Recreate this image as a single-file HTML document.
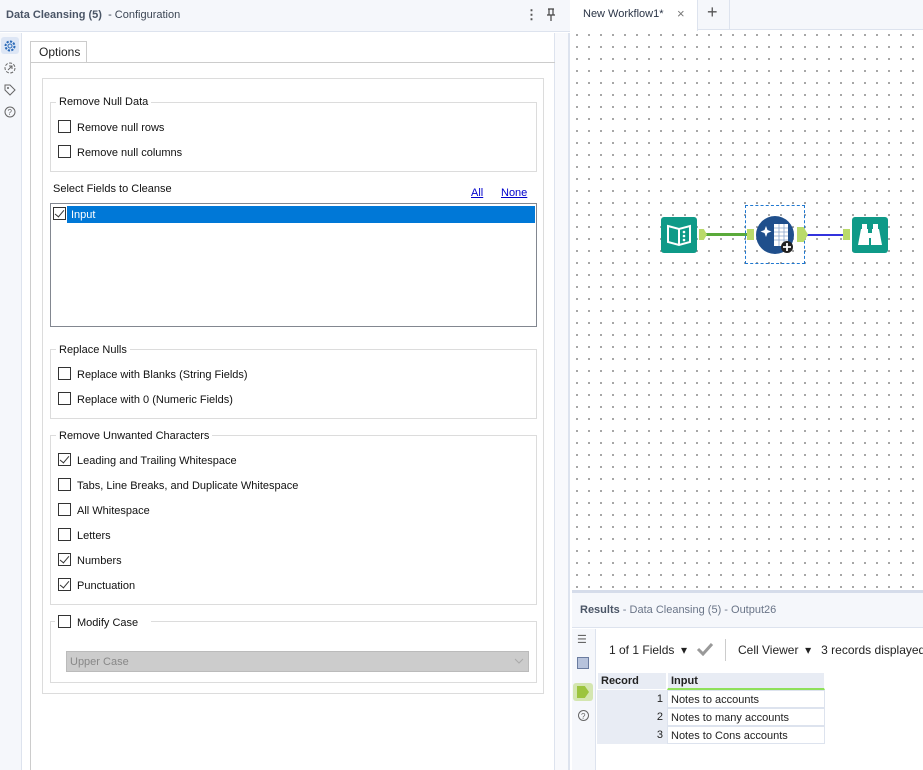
<!DOCTYPE html>
<html><head><style>
*{box-sizing:border-box;margin:0;padding:0}
body{width:923px;height:770px;position:relative;overflow:hidden;font-family:"Liberation Sans",sans-serif;font-size:11px;color:#222;background:#fff}
.a{position:absolute;white-space:nowrap}
.cb{position:absolute;width:13px;height:13px;border:1px solid #333;background:#fff}
.cb.c::after{content:"";position:absolute;left:3px;top:0px;width:4px;height:8px;border:solid #333;border-width:0 1.5px 1.5px 0;transform:rotate(40deg)}
.lbl{position:absolute;font-size:11px;color:#111;white-space:nowrap;margin-top:1px}
.grp{position:absolute;border:1px solid #dcdcdc}
.gt{position:absolute;background:#fff;padding:0 3px;font-size:11px;color:#111;margin-top:1px}
</style></head><body>
<div class="a" style="left:0;top:0;width:570px;height:32px;background:#f5f7fb;border-bottom:1px solid #dde3ee"></div>
<div class="a" style="left:6px;top:9px;font-size:11px;color:#3c4654"><span style="font-weight:bold;color:#4a5566">Data Cleansing (5)</span>&nbsp; - Configuration</div>
<div class="a" style="left:525px;top:7px;font-size:13px;color:#555;font-weight:bold">⋮</div>
<svg class="a" style="left:545px;top:8px" width="12" height="14"><path d="M3 1h6M4 1v6M8 1v6M2 7h8M6 7v6" stroke="#444" stroke-width="1.2" fill="none"/></svg>
<div class="a" style="left:0;top:33px;width:22px;height:737px;background:#f5f7fb;border-right:1px solid #dde3ee"></div>
<div class="a" style="left:1px;top:37px;width:18px;height:17px;background:#dde6f5;border-radius:3px"></div>
<svg class="a" style="left:3px;top:39px" width="14" height="14"><circle cx="7" cy="7" r="4.5" stroke="#2a6ab8" stroke-width="2" fill="none" stroke-dasharray="2.2 1.3"/><circle cx="7" cy="7" r="2" stroke="#2a6ab8" fill="none"/></svg>
<svg class="a" style="left:3px;top:61px" width="14" height="14"><circle cx="7" cy="7" r="5" stroke="#666" fill="none" stroke-dasharray="3 1.5"/><path d="M5 9l4-4M6 5h3v3" stroke="#666" fill="none"/></svg>
<svg class="a" style="left:3px;top:83px" width="14" height="14"><path d="M2 2h5l5 5-5 5-5-5z" stroke="#666" fill="none"/><circle cx="5" cy="5" r="1" fill="#666"/></svg>
<svg class="a" style="left:3px;top:105px" width="14" height="14"><circle cx="7" cy="7" r="5" stroke="#666" fill="none"/><text x="4.5" y="10" font-size="8" fill="#666" font-family="Liberation Sans">?</text></svg>
<div class="a" style="left:554px;top:33px;width:16px;height:737px;background:#f8f9fc;border-left:1px solid #dde3ee;border-right:2px solid #dde3ee"></div>
<div class="a" style="left:30px;top:41px;width:57px;height:22px;border:1px solid #ccc;border-bottom:none;background:#fff;font-size:12px;padding:3px 0 0 8px">Options</div>
<div class="a" style="left:30px;top:62px;width:525px;height:1px;background:#ccc"></div>
<div class="a" style="left:30px;top:62px;width:1px;height:708px;background:#ccc"></div>
<div class="a" style="left:42px;top:78px;width:502px;height:616px;border:1px solid #dcdcdc"></div>

<div class="grp" style="left:50px;top:102px;width:487px;height:70px"></div>
<div class="gt" style="left:56px;top:95px">Remove Null Data</div>
<div class="cb" style="left:58px;top:120px"></div><div class="lbl" style="left:77px;top:121px">Remove null rows</div>
<div class="cb" style="left:58px;top:145px"></div><div class="lbl" style="left:77px;top:146px">Remove null columns</div>

<div class="lbl" style="left:53px;top:182px">Select Fields to Cleanse</div>
<div class="lbl" style="left:471px;top:186px;color:#00c;text-decoration:underline">All</div>
<div class="lbl" style="left:501px;top:186px;color:#00c;text-decoration:underline">None</div>
<div class="a" style="left:50px;top:203px;width:487px;height:124px;border:1px solid #828790"></div>
<div class="a" style="left:67px;top:206px;width:468px;height:17px;background:#0078d7"></div>
<div class="cb c" style="left:53px;top:207px"></div>
<div class="lbl" style="left:71px;top:208px;color:#fff">Input</div>

<div class="grp" style="left:50px;top:349px;width:487px;height:70px"></div>
<div class="gt" style="left:56px;top:343px">Replace Nulls</div>
<div class="cb" style="left:58px;top:367px"></div><div class="lbl" style="left:77px;top:368px">Replace with Blanks (String Fields)</div>
<div class="cb" style="left:58px;top:392px"></div><div class="lbl" style="left:77px;top:393px">Replace with 0 (Numeric Fields)</div>

<div class="grp" style="left:50px;top:435px;width:487px;height:170px"></div>
<div class="gt" style="left:56px;top:429px">Remove Unwanted Characters</div>
<div class="cb c" style="left:58px;top:453px"></div><div class="lbl" style="left:77px;top:454px">Leading and Trailing Whitespace</div>
<div class="cb" style="left:58px;top:478px"></div><div class="lbl" style="left:77px;top:479px">Tabs, Line Breaks, and Duplicate Whitespace</div>
<div class="cb" style="left:58px;top:503px"></div><div class="lbl" style="left:77px;top:504px">All Whitespace</div>
<div class="cb" style="left:58px;top:528px"></div><div class="lbl" style="left:77px;top:529px">Letters</div>
<div class="cb c" style="left:58px;top:553px"></div><div class="lbl" style="left:77px;top:554px">Numbers</div>
<div class="cb c" style="left:58px;top:578px"></div><div class="lbl" style="left:77px;top:579px">Punctuation</div>

<div class="grp" style="left:50px;top:621px;width:487px;height:62px"></div>
<div class="a" style="left:55px;top:614px;width:96px;height:16px;background:#fff"></div>
<div class="cb" style="left:58px;top:615px"></div><div class="lbl" style="left:77px;top:616px">Modify Case</div>
<div class="a" style="left:66px;top:651px;width:463px;height:21px;background:#ccc;border:1px solid #bbb;color:#888;font-size:11px;padding:4px 0 0 3px">Upper Case</div>
<svg class="a" style="left:514px;top:657px" width="10" height="8"><path d="M1 2l4 4 4-4" stroke="#aaa" fill="none"/></svg>

<div class="a" style="left:572px;top:0;width:351px;height:30px;background:#f5f7fb;border-bottom:1px solid #dde3ee"></div>
<div class="a" style="left:572px;top:0;width:126px;height:31px;background:#fff;border-right:1px solid #dde3ee"></div>
<div class="a" style="left:583px;top:8px;font-size:11px;color:#2a3446">New Workflow1*</div>
<div class="a" style="left:677px;top:6px;font-size:13px;color:#777">×</div>
<div class="a" style="left:707px;top:2px;font-size:18px;color:#555">+</div>
<div class="a" style="left:729px;top:0;width:1px;height:30px;background:#dde3ee"></div>
<div class="a" style="left:572px;top:31px;width:351px;height:560px;background-color:#fff;background-image:radial-gradient(circle,#8a8a8a 0.8px,transparent 1px);background-size:12px 12px;background-position:-1px -2px"></div>
<div class="a" style="left:703px;top:233px;width:47px;height:3px;background:#5aaa3a"></div>
<div class="a" style="left:805px;top:234px;width:40px;height:2px;background:#3333dd"></div>
<div class="a" style="left:745px;top:205px;width:60px;height:59px;border:1px dashed #1f78d1"></div>
<div class="a" style="left:661px;top:217px;width:36px;height:36px;background:#0f9a88;border-radius:3px"></div>
<svg class="a" style="left:663px;top:221px" width="32" height="28"><path d="M5 5l11 3 11-3v16l-11 3-11-3z" stroke="#fff" stroke-width="2" fill="none"/><path d="M16 8v16" stroke="#fff" stroke-width="2"/><circle cx="21" cy="11" r="1.3" fill="#fff"/><circle cx="21" cy="15" r="1.3" fill="#fff"/><circle cx="21" cy="19" r="1.3" fill="#fff"/></svg>
<div class="a" style="left:699px;top:229px;width:8px;height:11px;background:#bada6a;clip-path:polygon(0 0,60% 0,100% 50%,60% 100%,0 100%)"></div>
<div class="a" style="left:747px;top:229px;width:7px;height:11px;background:#bada6a"></div>
<div class="a" style="left:756px;top:216px;width:38px;height:38px;border-radius:50%;background:#1f4f8c"></div>
<svg class="a" style="left:756px;top:216px" width="40" height="40"><rect x="18" y="8" width="14" height="22" fill="#fff"/><path d="M18 12h14M18 16h14M18 20h14M18 24h14M23 8v22M28 8v22" stroke="#8aa6cc" stroke-width="0.8"/><path d="M10 10l1.5 4 4 1.5-4 1.5-1.5 4-1.5-4-4-1.5 4-1.5z" fill="#fff"/><circle cx="31" cy="31" r="6" fill="#222"/><path d="M31 27v8M27 31h8" stroke="#fff" stroke-width="1.8"/></svg>
<div class="a" style="left:797px;top:227px;width:11px;height:15px;background:#bada6a;clip-path:polygon(0 0,60% 0,100% 50%,60% 100%,0 100%)"></div>
<div class="a" style="left:843px;top:229px;width:7px;height:11px;background:#bada6a"></div>
<div class="a" style="left:852px;top:217px;width:36px;height:36px;background:#0f9a88;border-radius:3px"></div>
<svg class="a" style="left:852px;top:217px" width="36" height="36"><rect x="10" y="7" width="5" height="5" fill="#fff"/><rect x="21" y="7" width="5" height="5" fill="#fff"/><path d="M9 12h7v4h4v-4h7l3 16h-11v-7h-2v7H6z" fill="#fff"/><path d="M18 21v8" stroke="#0f9a88" stroke-width="1.5"/></svg>
<div class="a" style="left:572px;top:590px;width:351px;height:3px;background:#d5dcea"></div>
<div class="a" style="left:572px;top:593px;width:351px;height:35px;background:#f5f7fb;border-bottom:1px solid #dde3ee"></div>
<div class="a" style="left:580px;top:604px;font-size:11px;color:#6a7588"><b style="color:#4a5566">Results</b> - Data Cleansing (5) - Output26</div>
<div class="a" style="left:572px;top:629px;width:24px;height:141px;background:#f5f7fb;border-right:1px solid #dde3ee"></div>
<div class="a" style="left:577px;top:633px;font-size:11px;color:#666">☰</div>
<div class="a" style="left:577px;top:657px;width:12px;height:12px;background:#b7c3dc;border:1px solid #6a7ca0"></div>
<div class="a" style="left:573px;top:683px;width:20px;height:18px;background:#d4e6b0;border-radius:3px"></div>
<div class="a" style="left:577px;top:686px;width:12px;height:12px;background:#9cc43e;clip-path:polygon(0 0,65% 0,100% 50%,65% 100%,0 100%)"></div>
<svg class="a" style="left:577px;top:709px" width="13" height="13"><circle cx="6.5" cy="6.5" r="5" stroke="#666" fill="none"/><text x="4" y="10" font-size="8" fill="#666" font-family="Liberation Sans">?</text></svg>
<div class="a" style="left:597px;top:629px;width:326px;height:41px;background:#fff"></div>
<div class="a" style="left:609px;top:643px;font-size:12px;color:#222">1 of 1 Fields &nbsp;▾</div>
<svg class="a" style="left:696px;top:642px" width="18" height="14"><path d="M2 7l5 5 9-10" stroke="#999" stroke-width="3" fill="none"/></svg>
<div class="a" style="left:725px;top:639px;width:1px;height:22px;background:#ccc"></div>
<div class="a" style="left:738px;top:643px;font-size:12px;color:#222">Cell Viewer &nbsp;▾ &nbsp; 3 records displayed</div>
<div class="a" style="left:597px;top:672px;width:70px;height:18px;background:#e8ecf4;border:1px solid #fff;font-weight:bold;padding:2px 0 0 3px">Record</div>
<div class="a" style="left:667px;top:672px;width:158px;height:18px;background:#e8ecf4;border:1px solid #fff;border-bottom:2px solid #8fe05a;font-weight:bold;padding:2px 0 0 3px">Input</div>
<div class="a" style="left:597px;top:690px;width:70px;height:54px;background:#e8ecf4"></div>
<div class="a" style="left:597px;top:693px;width:66px;text-align:right">1</div>
<div class="a" style="left:597px;top:711px;width:66px;text-align:right">2</div>
<div class="a" style="left:597px;top:729px;width:66px;text-align:right">3</div>
<div class="a" style="left:667px;top:690px;width:158px;height:18px;border:1px solid #dde3ee;padding:3px 0 0 3px">Notes to accounts</div>
<div class="a" style="left:667px;top:708px;width:158px;height:18px;border:1px solid #dde3ee;padding:3px 0 0 3px">Notes to many accounts</div>
<div class="a" style="left:667px;top:726px;width:158px;height:18px;border:1px solid #dde3ee;padding:3px 0 0 3px">Notes to Cons accounts</div>
</body></html>
